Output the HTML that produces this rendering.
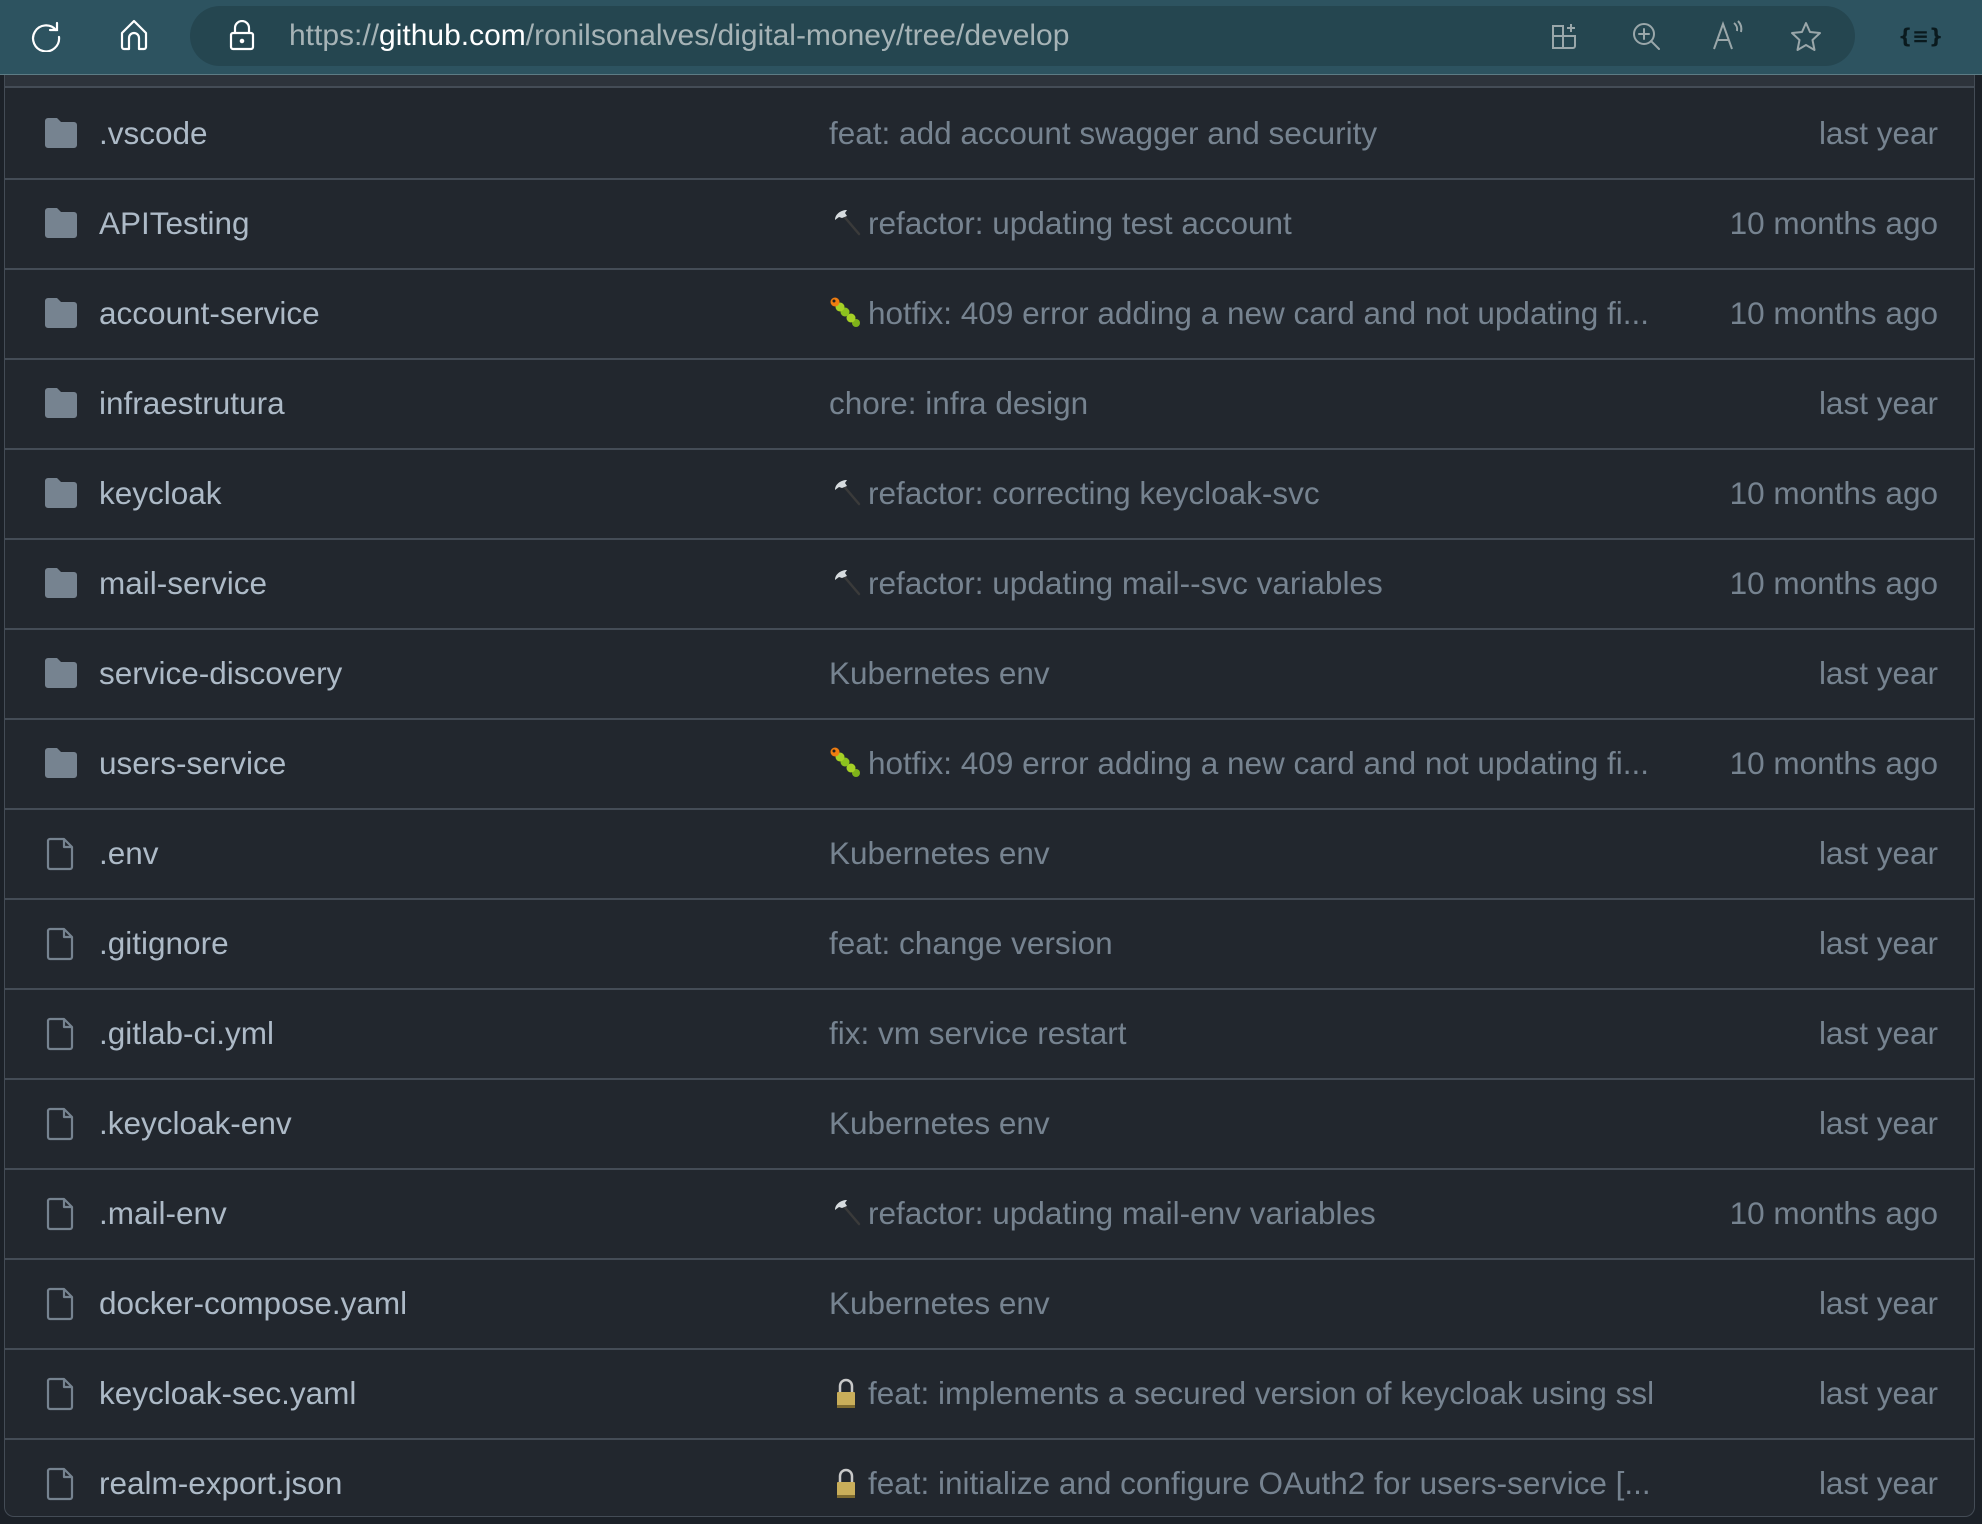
<!DOCTYPE html>
<html><head><meta charset="utf-8"><style>
*{margin:0;padding:0;box-sizing:border-box}
body{width:1982px;height:1524px;background:#1c2128;position:relative;overflow:hidden;font-family:"Liberation Sans",sans-serif}
#bar{position:absolute;left:0;top:0;width:1982px;height:75px;background:#2d5360;border-bottom:1px solid #5d7c85}
#pill{position:absolute;left:190px;top:6px;width:1665px;height:60px;border-radius:30px;background:#254650}
#url{position:absolute;left:289px;top:19px;font-size:30px;color:#a6b3b6;white-space:nowrap}
#url b{color:#fff;font-weight:normal}
.ic{position:absolute}
#box{position:absolute;left:4px;top:75px;width:1971px;height:1442px;background:#22272e;border:1px solid #444c56;border-top:none;border-radius:0 0 10px 10px;overflow:hidden}
#band{position:absolute;left:0;top:0;width:100%;height:13px;background:#2d333b;border-bottom:2px solid #444c56}
.row{position:absolute;left:0;width:100%;height:90px;border-bottom:2px solid #444c56}
.row:last-child{border-bottom:none}
.nm{position:absolute;left:94px;top:25px;font-size:31.5px;color:#adbac7;white-space:nowrap}
.ms{position:absolute;left:824px;top:25px;font-size:31.5px;color:#768390;white-space:nowrap}
.ms.e{left:863px}
.tm{position:absolute;right:36px;top:25px;font-size:31.5px;color:#768390}
.fi{position:absolute;left:38px;top:27px}
.em{position:absolute;left:824px;top:26px}
</style></head><body>
<div id="bar">
<svg class="ic" style="left:30px;top:20px" width="32" height="32" viewBox="0 0 32 32" fill="none" stroke="#fff" stroke-width="2.2" stroke-linecap="round"><path d="M26 10A13 13 0 1 0 29 17"/><path d="M27 3v7h-7"/></svg>
<svg class="ic" style="left:119px;top:19px" width="30" height="32" viewBox="0 0 30 32" fill="none" stroke="#fff" stroke-width="2.2" stroke-linejoin="round"><path d="M3 14L15 2l12 12v14a2 2 0 0 1-2 2h-5V19a5 5 0 0 0-10 0v11H5a2 2 0 0 1-2-2z"/></svg>
<div id="pill"></div>
<svg class="ic" style="left:229px;top:20px" width="26" height="32" viewBox="0 0 26 32" fill="none" stroke="#fff" stroke-width="2.2"><path d="M6 13V8a7 7 0 0 1 14 0v5"/><rect x="2" y="13" width="22" height="16" rx="2"/><circle cx="13" cy="21" r="1.2" fill="#fff"/></svg>
<div id="url">https://<b>github.com</b>/ronilsonalves/digital-money/tree/develop</div>
<svg class="ic" style="left:1551px;top:22px" width="30" height="30" viewBox="0 0 30 30" fill="none" stroke="#9aa7aa" stroke-width="2"><path d="M2 4h10v10H2zM2 14v12h10M12 14h12v10a2 2 0 0 1-2 2H12V14zM20 2v8M16 6h8"/></svg>
<svg class="ic" style="left:1632px;top:22px" width="30" height="30" viewBox="0 0 30 30" fill="none" stroke="#9aa7aa" stroke-width="2" stroke-linecap="round"><circle cx="12" cy="12" r="10"/><path d="M19 19l8 8M12 7v10M7 12h10"/></svg>
<svg class="ic" style="left:1712px;top:20px" width="32" height="32" viewBox="0 0 32 32" fill="none" stroke="#9aa7aa" stroke-width="2"><path d="M2 29L11 4l9 25M5 20h12M22 3a8 8 0 0 1 3 8M26 1a12 12 0 0 1 3 11"/></svg>
<svg class="ic" style="left:1789px;top:20px" width="34" height="34" viewBox="0 0 34 34" fill="none" stroke="#9aa7aa" stroke-width="2" stroke-linejoin="round"><path d="M17 3l4 9 10 1-7.5 7 2 10L17 25l-8.5 5 2-10L3 13l10-1z"/></svg>
<div class="ic" style="left:1898px;top:24px;font-size:20px;font-weight:bold;color:#0a1a1e;font-family:'DejaVu Sans',sans-serif">{≡}</div>
</div>
<div id="box">
<div id="band"></div>
<div id="rows"></div>
</div>
<script>
var F='<svg class="fi" width="36" height="32" viewBox="0 0 36 32"><path d="M2 4a3 3 0 0 1 3-3h9l4 4h13a3 3 0 0 1 3 3v20a3 3 0 0 1-3 3H5a3 3 0 0 1-3-3z" fill="#768390"/></svg>';
var D='<svg class="fi" width="36" height="34" viewBox="0 0 36 34" fill="none" stroke="#768390" stroke-width="2.2" stroke-linejoin="round"><path d="M7 2h14l8 8v20a2 2 0 0 1-2 2H7a2 2 0 0 1-2-2V4a2 2 0 0 1 2-2zM21 2v8h8"/></svg>';
var H='<svg class="em" width="34" height="34" viewBox="0 0 34 34"><path d="M13 8l17 20" stroke="#3a3a3a" stroke-width="2.5" stroke-linecap="round"/><path d="M6 14c0-6 6-10 12-10l-2 3 2 3-5 2-3-1z" fill="#d6dbde"/></svg>';
var B='<svg class="em" width="34" height="34" viewBox="0 0 34 34"><circle cx="27" cy="27" r="4" fill="#7fb21a"/><circle cx="22" cy="22" r="4.5" fill="#a6d125"/><circle cx="16" cy="16" r="4.5" fill="#8cc21e"/><circle cx="11" cy="11" r="4.5" fill="#a6d125"/><circle cx="6" cy="6" r="4.5" fill="#f07d10"/><circle cx="5" cy="5" r="1.5" fill="#222"/></svg>';
var L='<svg class="em" width="34" height="34" viewBox="0 0 34 34"><path d="M11 16V10a6 6 0 0 1 12 0v6" fill="none" stroke="#c8c8c8" stroke-width="2.5"/><rect x="8" y="16" width="18" height="16" rx="1" fill="#c9ae5a"/><rect x="8" y="29" width="18" height="3" fill="#7d6a30"/></svg>';
var r=[
[1,'.vscode','','feat: add account swagger and security','last year'],
[1,'APITesting',H,'refactor: updating test account','10 months ago'],
[1,'account-service',B,'hotfix: 409 error adding a new card and not updating fi...','10 months ago'],
[1,'infraestrutura','','chore: infra design','last year'],
[1,'keycloak',H,'refactor: correcting keycloak-svc','10 months ago'],
[1,'mail-service',H,'refactor: updating mail--svc variables','10 months ago'],
[1,'service-discovery','','Kubernetes env','last year'],
[1,'users-service',B,'hotfix: 409 error adding a new card and not updating fi...','10 months ago'],
[0,'.env','','Kubernetes env','last year'],
[0,'.gitignore','','feat: change version','last year'],
[0,'.gitlab-ci.yml','','fix: vm service restart','last year'],
[0,'.keycloak-env','','Kubernetes env','last year'],
[0,'.mail-env',H,'refactor: updating mail-env variables','10 months ago'],
[0,'docker-compose.yaml','','Kubernetes env','last year'],
[0,'keycloak-sec.yaml',L,'feat: implements a secured version of keycloak using ssl','last year'],
[0,'realm-export.json',L,'feat: initialize and configure OAuth2 for users-service [...','last year']];
var h='';
r.forEach(function(x,i){h+='<div class="row" style="top:'+(15+i*90)+'px">'+(x[0]?F:D)+'<div class="nm">'+x[1]+'</div>'+x[2]+'<div class="ms'+(x[2]?' e':'')+'">'+x[3]+'</div><div class="tm">'+x[4]+'</div></div>';});
document.getElementById('rows').innerHTML=h;
</script>
</body></html>
